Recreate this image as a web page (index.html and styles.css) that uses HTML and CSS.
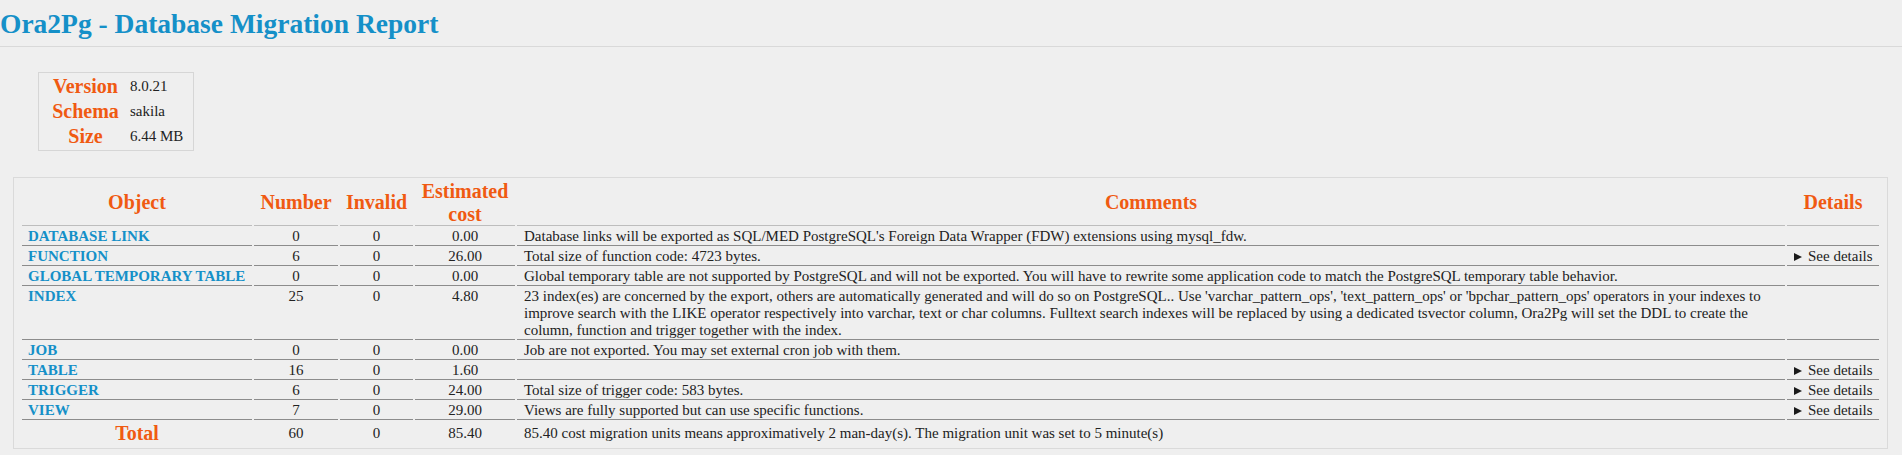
FILE: index.html
```html
<!DOCTYPE html>
<html lang="en">
<head>
<meta charset="utf-8">
<title>Ora2Pg - Database Migration Report</title>
<link rel="stylesheet" href="styles.css">
</head>
<body>
<div class="header">
  <h1 class="title">Ora2Pg - Database Migration Report</h1>
</div>
<table class="info">
  <tr><th>Version</th><td>8.0.21</td></tr>
  <tr><th>Schema</th><td>sakila</td></tr>
  <tr><th>Size</th><td>6.44 MB</td></tr>
</table>
<div class="report">
  <table class="objects">
    <thead>
      <tr>
        <th class="c-object">Object</th>
        <th class="c-number">Number</th>
        <th class="c-invalid">Invalid</th>
        <th class="c-cost">Estimated cost</th>
        <th class="c-comments">Comments</th>
        <th class="c-details">Details</th>
      </tr>
    </thead>
    <tbody>
      <tr>
        <td class="obj"><a href="#" class="obj-link">DATABASE LINK</a></td>
        <td class="num">0</td><td class="num">0</td><td class="num">0.00</td>
        <td class="cmt">Database links will be exported as SQL/MED PostgreSQL's Foreign Data Wrapper (FDW) extensions using mysql_fdw.</td>
        <td class="det"></td>
      </tr>
      <tr>
        <td class="obj"><a href="#" class="obj-link">FUNCTION</a></td>
        <td class="num">6</td><td class="num">0</td><td class="num">26.00</td>
        <td class="cmt">Total size of function code: 4723 bytes.</td>
        <td class="det"><details><summary>See details</summary><div class="det-body">6 function(s)</div></details></td>
      </tr>
      <tr>
        <td class="obj"><a href="#" class="obj-link">GLOBAL TEMPORARY TABLE</a></td>
        <td class="num">0</td><td class="num">0</td><td class="num">0.00</td>
        <td class="cmt">Global temporary table are not supported by PostgreSQL and will not be exported. You will have to rewrite some application code to match the PostgreSQL temporary table behavior.</td>
        <td class="det"></td>
      </tr>
      <tr>
        <td class="obj"><a href="#" class="obj-link">INDEX</a></td>
        <td class="num">25</td><td class="num">0</td><td class="num">4.80</td>
        <td class="cmt">23 index(es) are concerned by the export, others are automatically generated and will do so on PostgreSQL.. Use 'varchar_pattern_ops', 'text_pattern_ops' or 'bpchar_pattern_ops' operators in your indexes to improve search with the LIKE operator respectively into varchar, text or char columns. Fulltext search indexes will be replaced by using a dedicated tsvector column, Ora2Pg will set the DDL to create the column, function and trigger together with the index.</td>
        <td class="det"></td>
      </tr>
      <tr>
        <td class="obj"><a href="#" class="obj-link">JOB</a></td>
        <td class="num">0</td><td class="num">0</td><td class="num">0.00</td>
        <td class="cmt">Job are not exported. You may set external cron job with them.</td>
        <td class="det"></td>
      </tr>
      <tr>
        <td class="obj"><a href="#" class="obj-link">TABLE</a></td>
        <td class="num">16</td><td class="num">0</td><td class="num">1.60</td>
        <td class="cmt"></td>
        <td class="det"><details><summary>See details</summary><div class="det-body">16 table(s)</div></details></td>
      </tr>
      <tr>
        <td class="obj"><a href="#" class="obj-link">TRIGGER</a></td>
        <td class="num">6</td><td class="num">0</td><td class="num">24.00</td>
        <td class="cmt">Total size of trigger code: 583 bytes.</td>
        <td class="det"><details><summary>See details</summary><div class="det-body">6 trigger(s)</div></details></td>
      </tr>
      <tr>
        <td class="obj"><a href="#" class="obj-link">VIEW</a></td>
        <td class="num">7</td><td class="num">0</td><td class="num">29.00</td>
        <td class="cmt">Views are fully supported but can use specific functions.</td>
        <td class="det"><details><summary>See details</summary><div class="det-body">7 view(s)</div></details></td>
      </tr>
      <tr class="total">
        <th class="total-label">Total</th>
        <td class="num">60</td><td class="num">0</td><td class="num">85.40</td>
        <td class="cmt">85.40 cost migration units means approximatively 2 man-day(s). The migration unit was set to 5 minute(s)</td>
        <td class="det"></td>
      </tr>
    </tbody>
  </table>
</div>
</body>
</html>
```

FILE: styles.css
```css
html, body {
  margin: 0;
  padding: 0;
  background: #efefef;
  color: #222;
  font-family: "Liberation Serif", "Times New Roman", serif;
  font-size: 15px;
}

.header {
  padding: 8px 0 6px 0;
  border-bottom: 1px solid #d9d9d9;
}

.title {
  margin: 0;
  font-size: 27.5px;
  line-height: 32px;
  font-weight: bold;
  color: #1590c8;
}

.info {
  margin: 25px 0 0 38px;
  border: 1px solid #d6d6d6;
  border-spacing: 2px;
}

.info th {
  width: 83px;
  padding: 0 0 0 3px;
  font-size: 20px;
  line-height: 23px;
  font-weight: bold;
  color: #f05a12;
  text-align: center;
}

.info td {
  width: 61px;
  padding: 0 0 0 1px;
  font-size: 15px;
  line-height: 23px;
}

.report {
  margin: 26px 14px 0 13px;
  border: 1px solid #dadada;
  padding: 0 6px 1px 6px;
}

.objects {
  width: 100%;
  table-layout: fixed;
  border-collapse: separate;
  border-spacing: 2px;
}

.objects th,
.objects td {
  box-sizing: border-box;
}

.objects thead th {
  padding: 0;
  font-size: 20px;
  line-height: 22.5px;
  font-weight: bold;
  color: #f05a12;
  text-align: center;
  vertical-align: middle;
  border-bottom: 1px solid #bdbdbd;
}

.c-object { width: 230px; }
.c-number { width: 84px; }
.c-invalid { width: 73px; }
.c-cost { width: 100px; }
.c-details { width: 92px; }

.objects td {
  padding: 0 6px;
  line-height: 17px;
  vertical-align: top;
  border-bottom: 1px solid #8c8c8c;
}

.objects td.num {
  text-align: center;
}

.objects td.cmt {
  padding-left: 7px;
}

.objects td.det {
  padding: 0 0 0 7px;
}

.obj-link {
  color: #1590c8;
  font-weight: bold;
  text-decoration: none;
}

.det summary {
  display: block;
  list-style: none;
  white-space: nowrap;
  cursor: pointer;
}

.det summary::-webkit-details-marker {
  display: none;
}

.det summary::before {
  content: "";
  display: inline-block;
  width: 0;
  height: 0;
  border-left: 8px solid #1a1a1a;
  border-top: 4.5px solid transparent;
  border-bottom: 4.5px solid transparent;
  margin-right: 6px;
  vertical-align: 0;
}

.det-body {
  padding: 2px 0;
}

.total td {
  border-bottom: none;
  vertical-align: middle;
}

.total-label {
  padding: 0;
  font-size: 20px;
  line-height: 23px;
  font-weight: bold;
  color: #f05a12;
  text-align: center;
}
```
